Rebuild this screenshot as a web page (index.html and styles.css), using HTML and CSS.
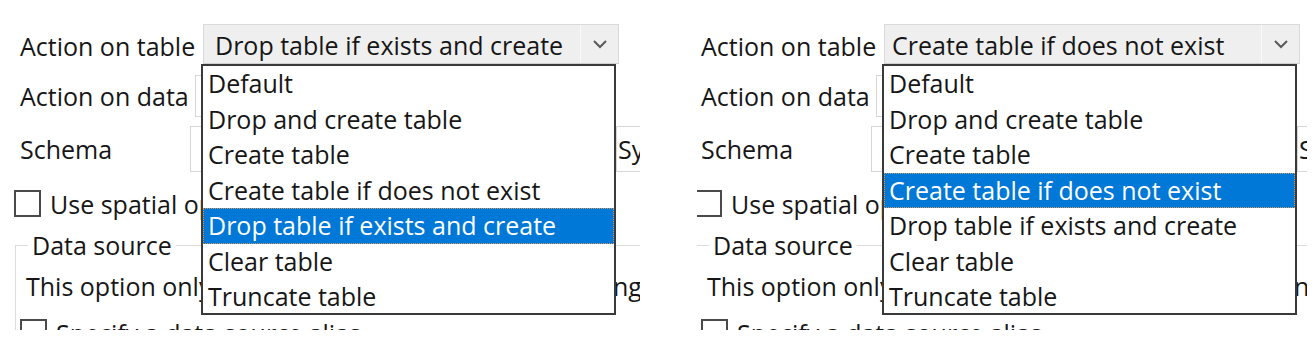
FILE: index.html
```html
<!DOCTYPE html>
<html>
<head>
<meta charset="utf-8">
<link rel="stylesheet" href="styles.css">
</head>
<body>
<div class="screens">
  <div class="panel">
    <div class="form">
      <div class="row row-table">
        <span class="label w-table">Action on table</span>
        <div class="combo">
          <span class="combo-text">Drop table if exists and create</span>
          <span class="combo-btn"><svg width="16" height="10" viewBox="0 0 16 10"><path d="M2 2 L8 8 L14 2" fill="none" stroke="#5a5a5a" stroke-width="2"/></svg></span>
        </div>
      </div>
      <div class="row row-data">
        <span class="label w-data">Action on data</span>
        <div class="field f-data"></div>
      </div>
      <div class="row row-schema">
        <span class="label w-schema">Schema</span>
        <div class="field f-schema"></div>
        <div class="field f-sys">System</div>
      </div>
      <div class="check-row spatial">
        <span class="box"></span>
        <span class="label">Use spatial options</span>
      </div>
      <fieldset class="group">
        <legend>Data source</legend>
        <div class="note">This option only applies to spatial tables when saving</div>
        <div class="check-row alias">
          <span class="box"></span>
          <span class="label">Specify a data source alias</span>
        </div>
      </fieldset>
    </div>
    <ul class="list">
      <li>Default</li>
      <li>Drop and create table</li>
      <li>Create table</li>
      <li>Create table if does not exist</li>
      <li class="sel">Drop table if exists and create</li>
      <li>Clear table</li>
      <li>Truncate table</li>
    </ul>
  </div>

  <div class="panel second">
    <div class="form">
      <div class="row row-table">
        <span class="label w-table">Action on table</span>
        <div class="combo">
          <span class="combo-text tight">Create table if does not exist</span>
          <span class="combo-btn"><svg width="16" height="10" viewBox="0 0 16 10"><path d="M2 2 L8 8 L14 2" fill="none" stroke="#5a5a5a" stroke-width="2"/></svg></span>
        </div>
      </div>
      <div class="row row-data">
        <span class="label w-data">Action on data</span>
        <div class="field f-data"></div>
      </div>
      <div class="row row-schema">
        <span class="label w-schema">Schema</span>
        <div class="field f-schema"></div>
        <div class="field f-sys">System</div>
      </div>
      <div class="check-row spatial">
        <span class="box"></span>
        <span class="label">Use spatial options</span>
      </div>
      <fieldset class="group">
        <legend>Data source</legend>
        <div class="note">This option only applies to spatial tables when saving</div>
        <div class="check-row alias">
          <span class="box"></span>
          <span class="label">Specify a data source alias</span>
        </div>
      </fieldset>
    </div>
    <ul class="list">
      <li>Default</li>
      <li>Drop and create table</li>
      <li>Create table</li>
      <li class="sel">Create table if does not exist</li>
      <li>Drop table if exists and create</li>
      <li>Clear table</li>
      <li>Truncate table</li>
    </ul>
  </div>
</div>
</body>
</html>
```

FILE: styles.css
```css
* { box-sizing: border-box; }
html, body {
  margin: 0;
  padding: 0;
  background: #ffffff;
}
body {
  font-family: "Open Sans", "Noto Sans", sans-serif;
  font-size: 25px;
  color: #161616;
}
.screens {
  display: flex;
  width: 1316px;
  height: 351px;
}
.panel {
  position: relative;
  width: 640px;
  height: 330px;
  overflow: hidden;
  flex: none;
}
.panel.second {
  width: 610px;
  margin-left: 57px;
}
.form {
  width: 800px;
}
.panel.second .form {
  margin-left: -16px;
}
.panel.second .list {
  left: 185px;
}
.row {
  display: flex;
  align-items: center;
  padding-left: 20px;
}
.row > * { flex: none; }
.label {
  white-space: nowrap;
  line-height: 32px;
}
.row-table { margin-top: 24px; height: 40px; }
.row-data { margin-top: 11px; height: 42px; }
.row-schema { margin-top: 9px; height: 46px; }
.w-table { width: 183px; padding-top: 4px; }
.w-data { width: 175px; }
.w-schema { width: 170px; }

.combo {
  display: flex;
  width: 416px;
  height: 40px;
  background: #efefef;
  border: 1px solid #dadada;
  border-bottom-color: #cfcfcf;
}
.combo-text {
  flex: 1;
  padding-left: 11px;
  line-height: 40px;
  white-space: nowrap;
  overflow: hidden;
}
.combo-text.tight { padding-left: 7px; }
.combo-btn {
  width: 38px;
  display: flex;
  align-items: center;
  justify-content: center;
  border-left: 1px solid #f9f9f9;
}
.field {
  height: 100%;
  background: #ffffff;
  border: 1px solid #d6d6d6;
}
.f-data { width: 410px; }
.f-schema { width: 422px; }
.f-sys {
  width: 120px;
  margin-left: 4px;
  padding-left: 1px;
  line-height: 44px;
  white-space: nowrap;
}

.check-row {
  display: flex;
  align-items: center;
  gap: 9px;
}
.check-row > * { flex: none; }
.box {
  width: 27px;
  height: 27px;
  border: 2px solid #4a4a4a;
  background: #fff;
}
.spatial {
  margin-top: 18px;
  padding-left: 14px;
  height: 27px;
}
.group {
  margin: 12px 0 0 15px;
  padding: 0;
  width: 780px;
  height: 200px;
  border: 1px solid #dcdcdc;
  border-right: none;
}
.group legend {
  margin-left: 12px;
  padding: 0 4px;
  line-height: 32px;
}
.note {
  padding-left: 10px;
  margin-top: 9px;
  line-height: 32px;
  white-space: nowrap;
}
.alias {
  margin-top: 17px;
  padding-left: 4px;
  height: 27px;
}

.list {
  position: absolute;
  left: 201px;
  top: 64px;
  width: 415px;
  height: 251px;
  margin: 0;
  padding: 0;
  list-style: none;
  background: #ffffff;
  border: 2px solid #3a3a3a;
}
.list li {
  height: 35.5px;
  line-height: 35.5px;
  padding-left: 5px;
  white-space: nowrap;
}
.list li.sel {
  background: #0078d7;
  color: #ffffff;
  outline: 1px dotted #c99a62;
  outline-offset: -1px;
}
```
